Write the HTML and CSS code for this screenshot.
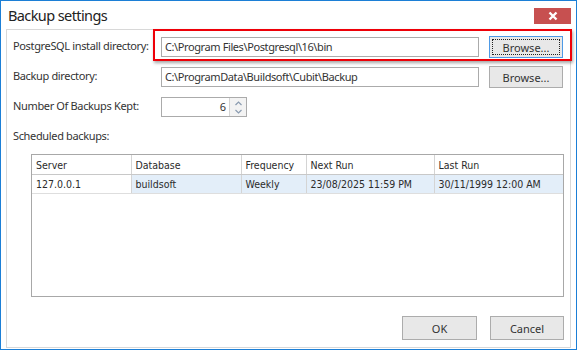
FILE: index.html
```html
<!DOCTYPE html>
<html lang="en">
<head>
    <meta charset="UTF-8">
    <title>Backup settings</title>
    <link rel="stylesheet" href="styles.css">
</head>
<body>

<div class="window">
    <!-- Title bar -->
    <div class="titlebar">
        <span class="title">Backup settings</span>
        <button class="close-btn">
            <svg width="12" height="10" viewBox="0 0 12 10">
                <path d="M2.5 1.5 L9.5 8.5 M9.5 1.5 L2.5 8.5" stroke="#fff" stroke-width="2.4" fill="none"/>
            </svg>
        </button>
    </div>

    <div class="panel">
        <div class="form">
            <label class="form-label">PostgreSQL install directory:</label>
            <div class="field">
                <div class="textbox">C:\Program Files\Postgresql\16\bin</div>
                <button class="btn focused"><span>Browse...</span></button>
            </div>

            <label class="form-label">Backup directory:</label>
            <div class="field">
                <div class="textbox">C:\ProgramData\Buildsoft\Cubit\Backup</div>
                <button class="btn"><span>Browse...</span></button>
            </div>

            <label class="form-label">Number Of Backups Kept:</label>
            <div class="field">
                <div class="spin">
                    <div class="spin-value">6</div>
                    <div class="spin-buttons">
                        <svg width="7" height="5" viewBox="0 0 7 5"><path d="M0.5 4 L3.5 1 L6.5 4" stroke="#8a9bb0" stroke-width="1.2" fill="none"/></svg>
                        <svg width="7" height="5" viewBox="0 0 7 5"><path d="M0.5 1 L3.5 4 L6.5 1" stroke="#8a9bb0" stroke-width="1.2" fill="none"/></svg>
                    </div>
                </div>
            </div>
        </div>

        <div class="section-label">Scheduled backups:</div>

        <div class="grid">
            <table>
                <colgroup>
                    <col style="width: 99px">
                    <col style="width: 110px">
                    <col style="width: 65px">
                    <col style="width: 128px">
                    <col>
                </colgroup>
                <thead>
                    <tr>
                        <th>Server</th>
                        <th>Database</th>
                        <th>Frequency</th>
                        <th>Next Run</th>
                        <th>Last Run</th>
                    </tr>
                </thead>
                <tbody>
                    <tr class="selected">
                        <td class="focused-cell">127.0.0.1</td>
                        <td>buildsoft</td>
                        <td>Weekly</td>
                        <td>23/08/2025 11:59 PM</td>
                        <td>30/11/1999 12:00 AM</td>
                    </tr>
                </tbody>
            </table>
        </div>

        <div class="footer">
            <button class="btn dialog-btn">OK</button>
            <button class="btn dialog-btn">Cancel</button>
        </div>

        <!-- Red annotation box -->
        <div class="highlight"></div>
    </div>
</div>

</body>
</html>
```

FILE: styles.css
```css
body {
    margin: 0;
    background: #ffffff;
    font-family: "Noto Sans", "Open Sans", sans-serif;
    color: #333333;
}

/* Window frame */
.window {
    width: 577px;
    height: 350px;
    box-sizing: border-box;
    border: 1px solid #1c7fd6;
    background: #ffffff;
    display: flex;
    flex-direction: column;
}

.titlebar {
    height: 28px;
    display: flex;
    align-items: flex-start;
    justify-content: space-between;
    flex-shrink: 0;
}

.title {
    font-size: 14.5px;
    line-height: 18px;
    margin: 5px 0 0 7px;
    letter-spacing: -0.6px;
    color: #222;
}

.close-btn {
    width: 37px;
    height: 16px;
    margin: 7px 5px 0 0;
    padding: 0;
    border: none;
    background: #c75050;
    display: flex;
    align-items: center;
    justify-content: center;
}

/* Content panel */
.panel {
    position: relative;
    flex: 1;
    margin: 0 5px 1px 5px;
    border: 1px solid #d8d8d8;
    padding: 7px 6px 0 6px;
}

.form {
    display: grid;
    grid-template-columns: 148px 1fr;
    row-gap: 10px;
}

.form-label {
    font-size: 11px;
    line-height: 14px;
    padding-top: 2px;
    letter-spacing: -0.35px;
    white-space: nowrap;
}

.field {
    display: flex;
    gap: 10px;
    height: 20px;
}

.textbox {
    width: 318px;
    height: 20px;
    box-sizing: border-box;
    border: 1px solid #ababab;
    font-size: 11px;
    line-height: 18px;
    padding-left: 3px;
    letter-spacing: -0.4px;
    white-space: nowrap;
}

.btn {
    font-family: inherit;
    font-size: 11px;
    color: #333;
    background: #e8e8e8;
    border: 1px solid #acacac;
    padding: 0;
    box-sizing: border-box;
}

.field .btn {
    width: 74px;
    height: 22px;
    margin-top: -1px;
}

.btn.focused {
    border-color: #4e9ae6;
    padding: 2px;
}

.btn.focused span {
    display: flex;
    align-items: center;
    justify-content: center;
    height: 100%;
    border: 1px dotted #222;
    box-sizing: border-box;
}

/* Spin edit */
.spin {
    width: 86px;
    height: 20px;
    box-sizing: border-box;
    border: 1px solid #ababab;
    display: flex;
}

.spin-value {
    flex: 1;
    text-align: right;
    font-size: 11px;
    line-height: 18px;
    padding-right: 3px;
}

.spin-buttons {
    width: 16px;
    background: #f3f3f3;
    border-left: 1px solid #d4d4d4;
    display: flex;
    flex-direction: column;
    align-items: center;
    justify-content: center;
    gap: 3px;
}

.spin-buttons svg {
    display: block;
}

.section-label {
    font-size: 11px;
    line-height: 14px;
    margin-top: 12px;
    letter-spacing: -0.35px;
}

/* Grid */
.grid {
    margin: 11px 0 0 18px;
    height: 143px;
    box-sizing: border-box;
    border: 1px solid #a8a8a8;
}

.grid table {
    width: 100%;
    border-collapse: collapse;
    table-layout: fixed;
    font-family: "DejaVu Sans Condensed", "DejaVu Sans", sans-serif;
    font-size: 10.5px;
}

.grid th,
.grid td {
    text-align: left;
    font-weight: normal;
    padding: 0 0 0 4px;
    white-space: nowrap;
    border-left: 1px solid #d4d4d4;
    color: #2b2b2b;
}

.grid th:first-child,
.grid td:first-child {
    border-left: none;
}

.grid th {
    height: 19px;
    border-bottom: 1px solid #c8c8c8;
}

.grid td {
    height: 18px;
    border-bottom: 1px solid #dedede;
}

.grid tr.selected td {
    background: #e3eef9;
}

.grid tr.selected td.focused-cell {
    background: #ffffff;
}

/* Dialog buttons */
.footer {
    display: flex;
    justify-content: flex-end;
    gap: 13px;
    margin-top: 19px;
}

.dialog-btn {
    width: 75px;
    height: 24px;
}

.dialog-btn + .dialog-btn {
    width: 74px;
}

.highlight {
    position: absolute;
    left: 146px;
    top: -1px;
    width: 419px;
    height: 32px;
    box-sizing: border-box;
    border: 2px solid #ee0008;
    box-shadow: 1px 2px 3px rgba(0, 0, 0, 0.35);
    pointer-events: none;
}
```
